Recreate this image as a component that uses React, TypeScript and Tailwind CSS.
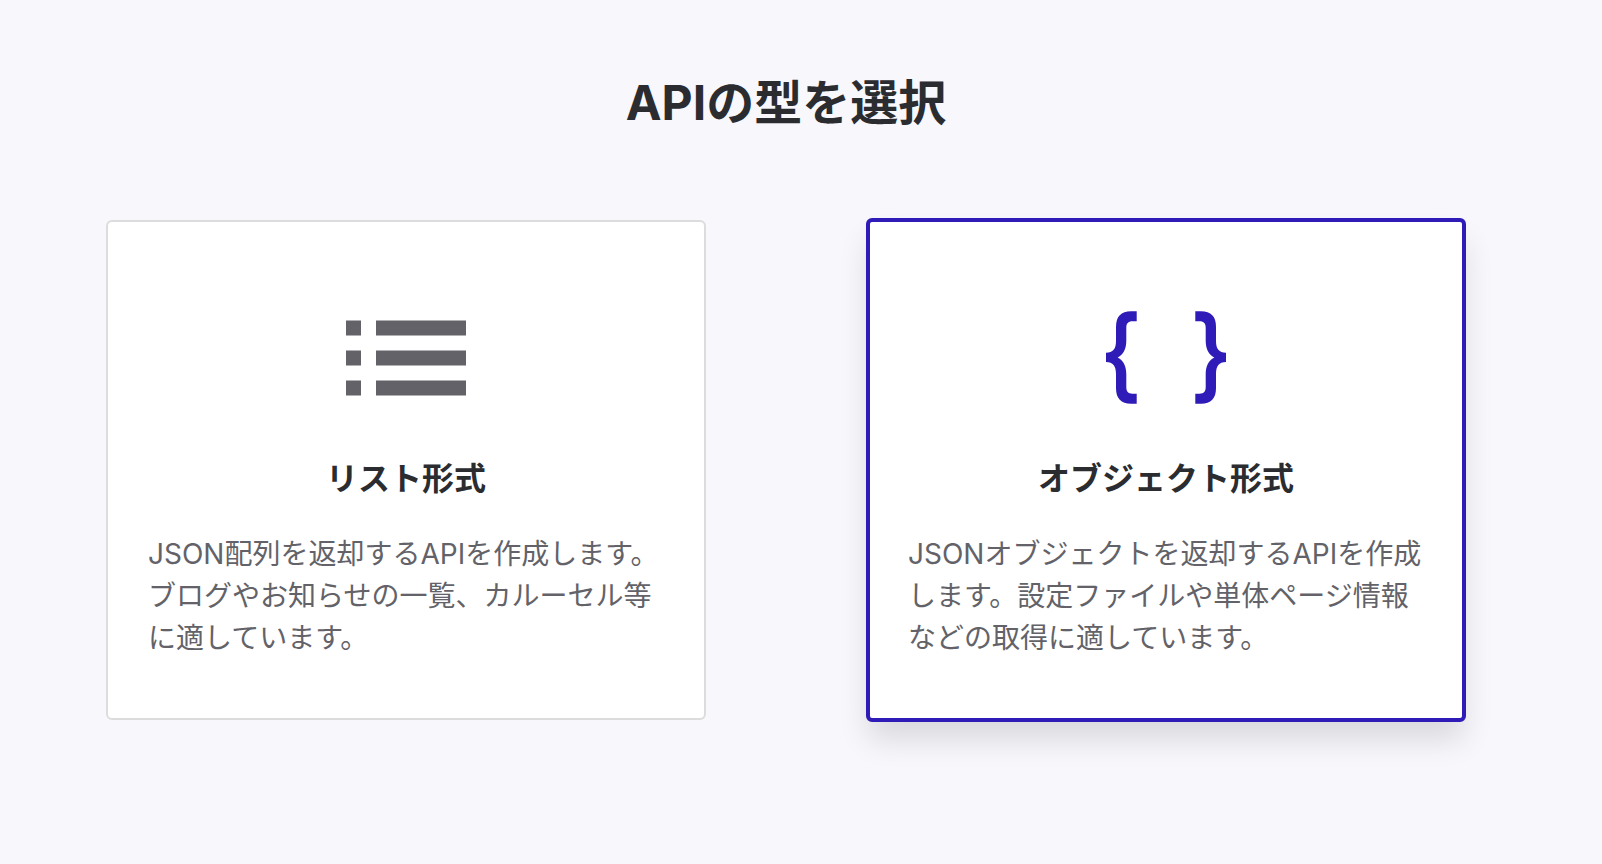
import { useState } from "react";
import type { ReactNode } from "react";
import clsx from "clsx";

type ApiType = "list" | "object";

const BRACE =
  "M30.7 13.3H25C15 13.3 10 18.5 10 29V43C10 51 7 54.7 0 54.7V64C7 64 10 68 10 76V90C10 100.5 15 105.7 25 105.7H30.7V95.7H26.5C22 95.7 20.3 93.5 20.3 89V76.5C20.3 68 17.5 62.5 11.7 59.4C17.5 56.5 20.3 51 20.3 42.5V30C20.3 25.5 22 23.3 26.5 23.3H30.7Z";

function ListIcon() {
  return (
    <svg viewBox="0 0 120 120" className="size-[120px]" fill="currentColor" aria-hidden="true">
      {[22.5, 52.5, 82.5].map((y) => (
        <g key={y}>
          <rect x="0" y={y} width="15" height="15" />
          <rect x="30" y={y} width="90" height="15" />
        </g>
      ))}
    </svg>
  );
}

function BracesIcon() {
  return (
    <svg viewBox="0 0 120 120" className="size-[120px]" fill="currentColor" aria-hidden="true">
      <path d={BRACE} />
      <path d={BRACE} transform="translate(120 0) scale(-1 1)" />
    </svg>
  );
}

const OPTIONS: { id: ApiType; title: string; text: string; icon: ReactNode }[] = [
  {
    id: "list",
    title: "リスト形式",
    text: "JSON配列を返却するAPIを作成します。ブログやお知らせの一覧、カルーセル等に適しています。",
    icon: <ListIcon />,
  },
  {
    id: "object",
    title: "オブジェクト形式",
    text: "JSONオブジェクトを返却するAPIを作成します。設定ファイルや単体ページ情報などの取得に適しています。",
    icon: <BracesIcon />,
  },
];

export default function App() {
  const [selected, setSelected] = useState<ApiType>("object");

  return (
    <main
      lang="ja"
      className="min-h-screen bg-[#f7f7fc] pt-[67px] pr-[136px] pb-16 pl-[106px] font-['Inter','Noto_Sans_CJK_JP',sans-serif] text-[#2b2c30]"
    >
      <h1 id="api-type" className="text-center text-5xl leading-[72px] font-bold">
        APIの型を選択
      </h1>
      <div role="radiogroup" aria-labelledby="api-type" className="mt-[79px] flex items-center gap-40">
        {OPTIONS.map(({ id, title, text, icon }) => {
          const active = selected === id;
          return (
            <label
              key={id}
              className={clsx(
                "relative flex flex-1 cursor-pointer flex-col items-center rounded-md bg-white pt-[76px] pb-[59px]",
                active
                  ? "border-4 border-[#2f1bb8] px-[38px] shadow-[0_20px_30px_-2px_rgba(0,0,0,0.12)]"
                  : "border-2 border-[#dcdcdd] px-10",
              )}
            >
              <input
                type="radio"
                name="api-type"
                value={id}
                checked={active}
                onChange={() => setSelected(id)}
                className="sr-only"
              />
              <span className={active ? "text-[#2f1bb8]" : "text-[#626268]"}>{icon}</span>
              <span className="mt-[37px] text-[32px] leading-[48px] font-bold">{title}</span>
              <span className="mt-[30px] w-full text-[28px] leading-[42px] text-[#626268]">{text}</span>
            </label>
          );
        })}
      </div>
    </main>
  );
}
